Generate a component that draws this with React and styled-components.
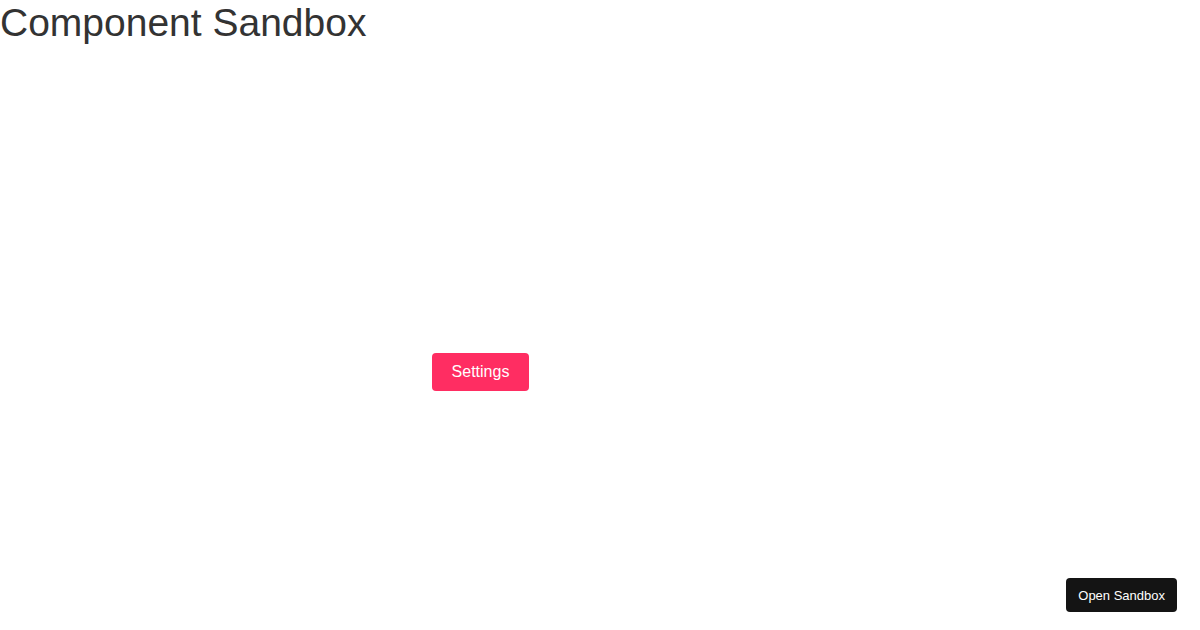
import styled, { createGlobalStyle } from "styled-components";

const GlobalStyle = createGlobalStyle`
  html, body {
    margin: 0;
    padding: 0;
    background: #fff;
    overflow: hidden;
    font-family: "Liberation Sans", Arial, sans-serif;
  }
`;

const Page = styled.div`
  width: 1200px;
  height: 630px;
  display: flex;
  flex-direction: column;
  overflow: hidden;
`;

const Title = styled.h1`
  margin: 0;
  font-size: 39px;
  font-weight: 400;
  line-height: 46px;
  color: #333;
`;

const Stage = styled.div`
  flex: 1;
  width: 961px;
  padding-top: 307px;
  box-sizing: border-box;
  display: flex;
  align-items: flex-start;
  justify-content: center;
`;

const Button = styled.button`
  border: 0;
  border-radius: 4px;
  font-family: "Liberation Sans", Arial, sans-serif;
  cursor: pointer;
  background: ${(p) => (p.$dark ? "#141414" : "#ff2d62")};
  color: #fff;
  font-size: ${(p) => (p.$dark ? "13px" : "16px")};
  height: ${(p) => (p.$dark ? "34px" : "38px")};
  padding: ${(p) => (p.$dark ? "0 12px" : "0 20px")};
`;

const Floating = styled.div`
  position: fixed;
  right: 23px;
  bottom: 18px;
`;

export default function App() {
  return (
    <Page>
      <GlobalStyle />
      <Title>Component Sandbox</Title>
      <Stage>
        <Button>Settings</Button>
      </Stage>
      <Floating>
        <Button $dark>Open Sandbox</Button>
      </Floating>
    </Page>
  );
}
